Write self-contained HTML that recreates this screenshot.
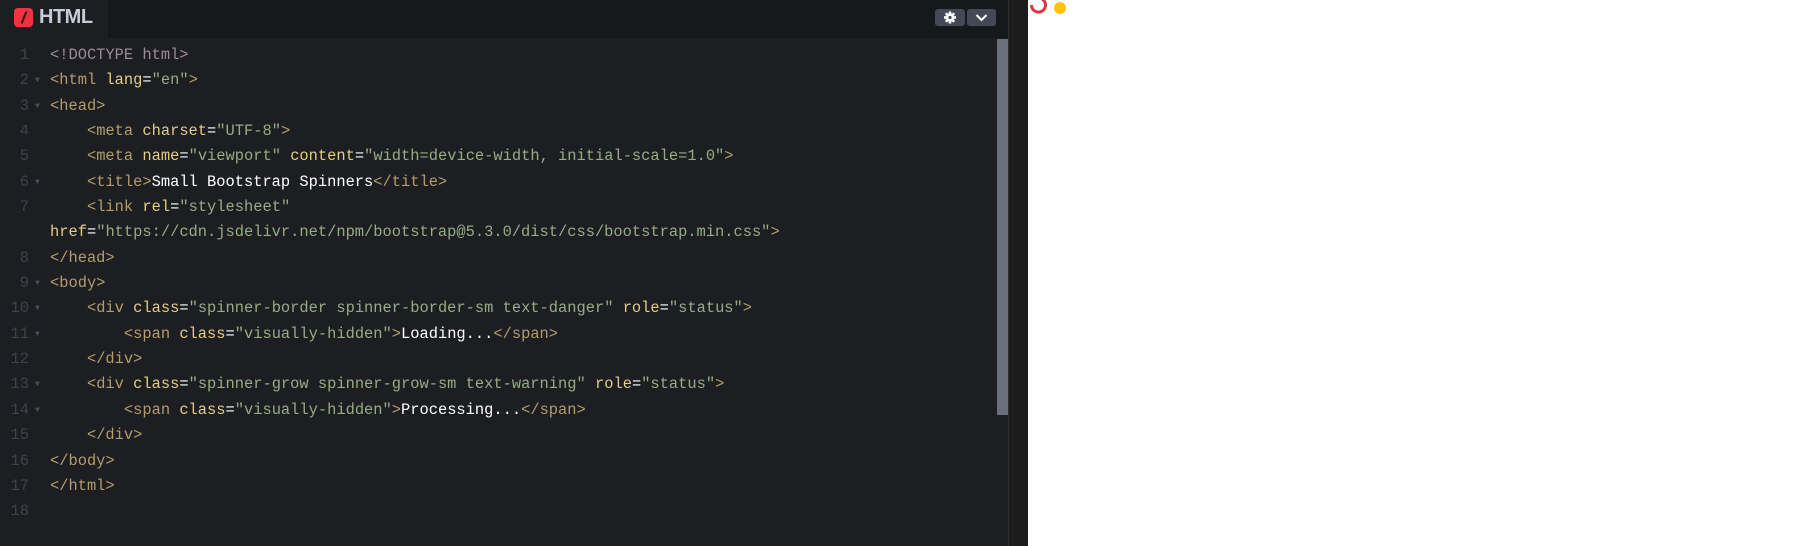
<!DOCTYPE html>
<html><head><meta charset="utf-8"><style>
html,body{margin:0;padding:0;width:1809px;height:546px;overflow:hidden;background:#fff;font-family:"Liberation Sans",sans-serif}
#ed{position:absolute;left:0;top:0;width:1008px;height:546px;background:#1d1e22;overflow:hidden}
#hdr{position:absolute;left:0;top:0;width:1008px;height:38px;background:#17181c}
#tab{position:absolute;left:0;top:0;width:108px;height:38px;background:#1d1e22}
#logo{position:absolute;left:14px;top:8px;width:19px;height:19px;background:#f0333f;border-radius:4px}
#logo:after{content:"";position:absolute;left:9px;top:3px;width:2px;height:13px;background:#1d1e22;transform:rotate(22deg)}
#ttl{position:absolute;left:39px;top:6px;color:#c6cbd8;font-weight:bold;font-size:20px;letter-spacing:-0.5px}
.btn{position:absolute;top:9px;height:17px;background:#444857;border-radius:3px}
#code{position:absolute;left:0;top:43px;width:990px;font-family:"Liberation Mono",monospace;font-size:15.4px;line-height:25.35px;color:#fff}
.r{height:25.35px;position:relative}
.n{position:absolute;left:0;width:29px;text-align:right;color:#3f424a}
.f{position:absolute;left:35px;top:0;color:#4c4f57;font-size:8px}
.c{position:absolute;left:50px;white-space:pre}
.t{color:#b39c6a}.a{color:#e2cc85}.s{color:#97ab85}.d{color:#9b8a9c}
#sb{position:absolute;left:997px;top:39px;width:11px;height:376px;background:#6b6e7b}
#div{position:absolute;left:1008px;top:0;width:20px;height:546px;background:#1c1c1c;border-left:1px solid #2d2d2d;box-sizing:border-box}
</style></head><body>
<div id="ed">
<div id="hdr"></div><div id="tab"></div>
<div id="logo"></div><div id="ttl">HTML</div>
<div class="btn" style="left:935px;width:30px"><svg width="30" height="17" viewBox="0 0 30 17"><g fill="#fff" transform="translate(15 8.5)"><circle r="4.2"/><rect x="-1.3" y="-6" width="2.6" height="12"/><rect x="-1.3" y="-6" width="2.6" height="12" transform="rotate(45)"/><rect x="-1.3" y="-6" width="2.6" height="12" transform="rotate(90)"/><rect x="-1.3" y="-6" width="2.6" height="12" transform="rotate(135)"/><circle r="1.6" fill="#444857"/></g></svg></div>
<div class="btn" style="left:967px;width:29px"><svg width="29" height="17" viewBox="0 0 29 17"><path d="M9.5 6 L14.5 11 L19.5 6" stroke="#fff" stroke-width="2" fill="none"/></svg></div>
<div id="code"><div class="r"><span class="n">1</span><span class="c"><span class="d">&lt;!DOCTYPE html&gt;</span></span></div><div class="r"><span class="n">2</span><span class="f">▼</span><span class="c"><span class="t">&lt;html </span><span class="a">lang</span>=<span class="s">"en"</span><span class="t">&gt;</span></span></div><div class="r"><span class="n">3</span><span class="f">▼</span><span class="c"><span class="t">&lt;head&gt;</span></span></div><div class="r"><span class="n">4</span><span class="c">    <span class="t">&lt;meta </span><span class="a">charset</span>=<span class="s">"UTF-8"</span><span class="t">&gt;</span></span></div><div class="r"><span class="n">5</span><span class="c">    <span class="t">&lt;meta </span><span class="a">name</span>=<span class="s">"viewport"</span> <span class="a">content</span>=<span class="s">"width=device-width, initial-scale=1.0"</span><span class="t">&gt;</span></span></div><div class="r"><span class="n">6</span><span class="f">▼</span><span class="c">    <span class="t">&lt;title&gt;</span>Small Bootstrap Spinners<span class="t">&lt;/title&gt;</span></span></div><div class="r"><span class="n">7</span><span class="c">    <span class="t">&lt;link </span><span class="a">rel</span>=<span class="s">"stylesheet"</span></span></div><div class="r"><span class="c"><span class="a">href</span>=<span class="s">"https://cdn.jsdelivr.net/npm/bootstrap@5.3.0/dist/css/bootstrap.min.css"</span><span class="t">&gt;</span></span></div><div class="r"><span class="n">8</span><span class="c"><span class="t">&lt;/head&gt;</span></span></div><div class="r"><span class="n">9</span><span class="f">▼</span><span class="c"><span class="t">&lt;body&gt;</span></span></div><div class="r"><span class="n">10</span><span class="f">▼</span><span class="c">    <span class="t">&lt;div </span><span class="a">class</span>=<span class="s">"spinner-border spinner-border-sm text-danger"</span> <span class="a">role</span>=<span class="s">"status"</span><span class="t">&gt;</span></span></div><div class="r"><span class="n">11</span><span class="f">▼</span><span class="c">        <span class="t">&lt;span </span><span class="a">class</span>=<span class="s">"visually-hidden"</span><span class="t">&gt;</span>Loading...<span class="t">&lt;/span&gt;</span></span></div><div class="r"><span class="n">12</span><span class="c">    <span class="t">&lt;/div&gt;</span></span></div><div class="r"><span class="n">13</span><span class="f">▼</span><span class="c">    <span class="t">&lt;div </span><span class="a">class</span>=<span class="s">"spinner-grow spinner-grow-sm text-warning"</span> <span class="a">role</span>=<span class="s">"status"</span><span class="t">&gt;</span></span></div><div class="r"><span class="n">14</span><span class="f">▼</span><span class="c">        <span class="t">&lt;span </span><span class="a">class</span>=<span class="s">"visually-hidden"</span><span class="t">&gt;</span>Processing...<span class="t">&lt;/span&gt;</span></span></div><div class="r"><span class="n">15</span><span class="c">    <span class="t">&lt;/div&gt;</span></span></div><div class="r"><span class="n">16</span><span class="c"><span class="t">&lt;/body&gt;</span></span></div><div class="r"><span class="n">17</span><span class="c"><span class="t">&lt;/html&gt;</span></span></div><div class="r"><span class="n">18</span></div></div>
<div id="sb"></div>
</div>
<div id="div"></div>
<svg style="position:absolute;left:1028px;top:0" width="50" height="20"><path d="M1.5 4 A7 7 0 1 0 12 -2" stroke="#dc3545" stroke-width="3" fill="none" transform="translate(2 1)"/><circle cx="32" cy="8" r="6" fill="#ffc107"/></svg>
</body></html>
